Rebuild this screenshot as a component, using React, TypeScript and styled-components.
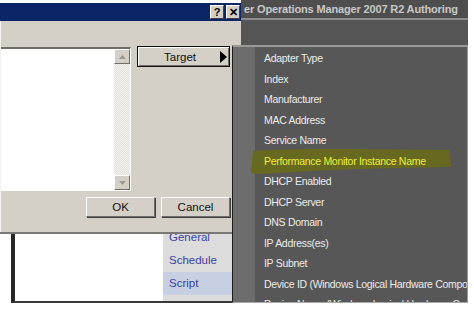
import React from 'react';
import styled, { createGlobalStyle } from 'styled-components';

const GlobalStyle = createGlobalStyle`
  html, body {
    margin: 0;
    padding: 0;
    background: #ffffff;
  }
  body {
    font-family: "Liberation Sans", Arial, sans-serif;
    font-size: 11px;
  }
`

const Page = styled.div`
  display: flex;
  flex-direction: row;
  width: 474px;
  height: 310px;
  overflow: hidden;
  background: #ffffff;
`

const LeftCol = styled.div`
  display: flex;
  flex-direction: column;
  width: 241px;
  flex-shrink: 0;
`

const TitleBar = styled.div`
  margin-top: 3px;
  height: 18px;
  background: #0b2566;
  display: flex;
  align-items: center;
  justify-content: flex-end;
  gap: 2px;
  padding-right: 1px;
`

const CaptionButton = styled.div`
  width: 14px;
  height: 14px;
  box-sizing: border-box;
  background: #d4d0c8;
  border-top: 1px solid #ffffff;
  border-left: 1px solid #ffffff;
  border-right: 1px solid #404040;
  border-bottom: 1px solid #404040;
  display: flex;
  align-items: center;
  justify-content: center;
  font-weight: bold;
  font-size: 11px;
  color: #000;
  line-height: 1;
`

const Dialog = styled.div`
  height: 211px;
  background: #d4d0c8;
  border-left: 1px solid #f4f2ee;
  box-sizing: border-box;
  display: flex;
  flex-direction: column;
  padding-top: 25px;
`

const ContentRow = styled.div`
  display: flex;
  flex-direction: row;
  align-items: flex-start;
  gap: 6px;
`

const ListBox = styled.div`
  margin-top: 1px;
  width: 130px;
  height: 144px;
  box-sizing: border-box;
  background: #ffffff;
  border-top: 2px solid #6f6d68;
  border-right: 1px solid #ffffff;
  border-bottom: 1px solid #ffffff;
  display: flex;
  justify-content: flex-end;
`

const ScrollBar = styled.div`
  width: 16px;
  display: flex;
  flex-direction: column;
  justify-content: space-between;
  background: repeating-conic-gradient(#f4f3ef 0 25%, #e2e0da 0 50%) 0 0 / 2px 2px;
`

const ScrollButton = styled.div`
  height: 15px;
  box-sizing: border-box;
  background: #d4d0c8;
  border-top: 1px solid #ffffff;
  border-left: 1px solid #ffffff;
  border-right: 1px solid #6f6d68;
  border-bottom: 1px solid #6f6d68;
  display: flex;
  align-items: center;
  justify-content: center;
`

const Win98Button = styled.div<{ $width: number; $height: number }>`
  width: ${(p) => p.$width}px;
  height: ${(p) => p.$height}px;
  box-sizing: border-box;
  background: #d4d0c8;
  border-top: 1px solid #ffffff;
  border-left: 1px solid #ffffff;
  border-right: 1px solid #6f6d68;
  border-bottom: 1px solid #6f6d68;
  box-shadow: 1px 1px 0 #404040;
  display: flex;
  align-items: center;
  justify-content: center;
  color: #111;
  font-size: 11.5px;
`

const TargetButton = styled.div`
  width: 93px;
  height: 21px;
  box-sizing: border-box;
  background: #d4d0c8;
  border: 1px solid #111;
  box-shadow: inset 1px 1px 0 #ffffff, inset -1px -1px 0 #6f6d68;
  display: flex;
  align-items: center;
  padding-right: 2px;
  color: #111;
  font-size: 11.5px;
`

const TargetLabel = styled.span`
  flex: 1;
  text-align: center;
  padding-left: 2px;
`

const ButtonRow = styled.div`
  display: flex;
  flex-direction: row;
  justify-content: flex-end;
  gap: 6px;
  margin-top: 6px;
  padding-right: 11px;
`

const LowerWindow = styled.div`
  height: 71px;
  box-sizing: border-box;
  border-top: 2px solid #7a7874;
  display: flex;
  flex-direction: row;
  padding-left: 11px;
`

const EditorPane = styled.div`
  flex: 1;
  background: #ffffff;
  border-left: 4px solid #262626;
  border-bottom: 2px solid #3a3a3a;
`

const NavPane = styled.div`
  width: 78px;
  background: #dcdcdc;
  border-bottom: 2px solid #3a3a3a;
  overflow: hidden;
`

const NavList = styled.div`
  margin-top: -8px;
  display: flex;
  flex-direction: column;
`

const NavItem = styled.div<{ $active?: boolean }>`
  height: 23px;
  line-height: 23px;
  padding-left: 6px;
  color: #3b3fa2;
  font-size: 11.5px;
  background: ${(p) => (p.$active ? '#c6d0e2' : 'transparent')};
`

const RightCol = styled.div`
  display: flex;
  flex-direction: column;
  width: 227px;
  flex-shrink: 0;
`

const DimTitle = styled.div`
  height: 18px;
  background: #4e4e4e;
  border-bottom: 2px solid #8c8c8c;
  color: #c9c9c9;
  font-weight: bold;
  font-size: 11px;
  letter-spacing: -0.15px;
  line-height: 18px;
  padding-left: 3px;
  white-space: nowrap;
  overflow: hidden;
`

const DimBand = styled.div`
  height: 25px;
  background: #555555;
`

const Menu = styled.div`
  position: relative;
  margin-left: -9px;
  height: 258px;
  box-sizing: border-box;
  background: #575757;
  border-top: 2px solid #9a9a9a;
  border-right: 1px solid #9a9a9a;
  border-bottom: 1px solid #a8a8a8;
  border-left: 1px solid #1e1e1e;
  display: flex;
  flex-direction: row;
  overflow: hidden;
`

const Gutter = styled.div`
  width: 22px;
  flex-shrink: 0;
  background: #6d6d6d;
`

const ItemList = styled.div`
  display: flex;
  flex-direction: column;
  padding-top: 1px;
`

const MenuItem = styled.div<{ $marked?: boolean }>`
  position: relative;
  height: 20.5px;
  line-height: 20.5px;
  padding-left: 9px;
  white-space: nowrap;
  font-size: 10.5px;
  letter-spacing: -0.3px;
  color: ${(p) => (p.$marked ? '#eeee3a' : '#ececec')};
`

const ItemText = styled.span`
  position: relative;
`

const Marker = styled.svg`
  position: absolute;
  left: -5px;
  top: -4px;
  width: 202px;
  height: 28px;
`

const ITEMS = [
  'Adapter Type',
  'Index',
  'Manufacturer',
  'MAC Address',
  'Service Name',
  'Performance Monitor Instance Name',
  'DHCP Enabled',
  'DHCP Server',
  'DNS Domain',
  'IP Address(es)',
  'IP Subnet',
  'Device ID (Windows Logical Hardware Compo',
  'Device Name (Windows Logical Hardware Compo',
];

const App = () => {
  return (
    <Page>
      <GlobalStyle />
      <LeftCol>
        <TitleBar>
          <CaptionButton>?</CaptionButton>
          <CaptionButton>✕</CaptionButton>
        </TitleBar>

        <Dialog>
          <ContentRow>
            <ListBox>
              <ScrollBar>
                <ScrollButton>
                  <svg width="7" height="4" viewBox="0 0 7 4">
                    <path d="M0 4 L3.5 0 L7 4 Z" fill="#9a9890" />
                  </svg>
                </ScrollButton>
                <ScrollButton>
                  <svg width="7" height="4" viewBox="0 0 7 4">
                    <path d="M0 0 L3.5 4 L7 0 Z" fill="#9a9890" />
                  </svg>
                </ScrollButton>
              </ScrollBar>
            </ListBox>

            <TargetButton>
              <TargetLabel>Target</TargetLabel>
              <svg width="7" height="12" viewBox="0 0 7 12">
                <path d="M0 0 L7 6 L0 12 Z" fill="#000" />
              </svg>
            </TargetButton>
          </ContentRow>

          <ButtonRow>
            <Win98Button $width={69} $height={20}>OK</Win98Button>
            <Win98Button $width={69} $height={20}>Cancel</Win98Button>
          </ButtonRow>
        </Dialog>

        <LowerWindow>
          <EditorPane />
          <NavPane>
            <NavList>
              <NavItem>General</NavItem>
              <NavItem>Schedule</NavItem>
              <NavItem $active>Script</NavItem>
            </NavList>
          </NavPane>
        </LowerWindow>
      </LeftCol>

      <RightCol>
        <DimTitle>er Operations Manager 2007 R2 Authoring</DimTitle>
        <DimBand />
        <Menu>
          <Gutter />
          <ItemList>
            {ITEMS.map((item, i) => (
              <MenuItem key={item} $marked={i === 5}>
                {i === 5 && (
                  <Marker viewBox="0 0 202 28" preserveAspectRatio="none">
                    <path
                      d="M3 4 C40 1, 120 2, 200 3 L201 20 C150 21, 80 22, 30 26 C18 27, 6 27, 1 26 Z"
                      fill="#66691f"
                    />
                  </Marker>
                )}
                <ItemText>{item}</ItemText>
              </MenuItem>
            ))}
          </ItemList>
        </Menu>
      </RightCol>
    </Page>
  );
};

export default App;
